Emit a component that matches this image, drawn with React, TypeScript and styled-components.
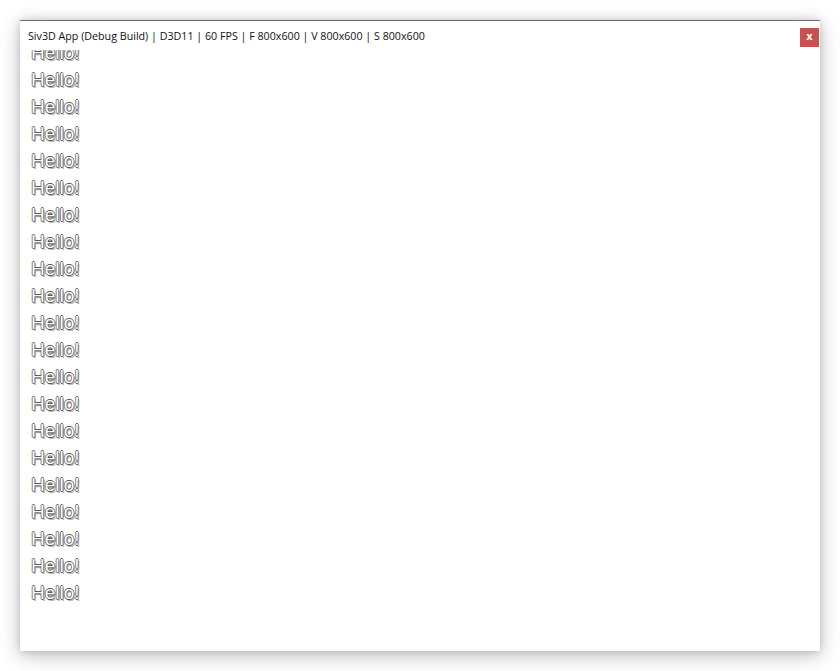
import React from "react";
import styled, { createGlobalStyle } from "styled-components";

const Global = createGlobalStyle`
  html, body { margin: 0; padding: 0; background: #ffffff; }
  body { width: 840px; height: 671px; overflow: hidden; }
`;

const Page = styled.div`
  width: 840px;
  height: 671px;
  padding: 20px 20px 0 20px;
  box-sizing: border-box;
  background: #ffffff;
`;

const Window = styled.div`
  width: 800px;
  height: 631px;
  box-sizing: border-box;
  border-top: 1px solid #6e6e6e;
  background: #ffffff;
  box-shadow: 0 4px 18px rgba(0, 0, 0, 0.28), 0 0 6px rgba(0, 0, 0, 0.12);
  display: flex;
  flex-direction: column;
`;

const TitleBar = styled.div`
  height: 29px;
  flex: 0 0 29px;
  display: flex;
  align-items: flex-start;
  justify-content: space-between;
  position: relative;
  z-index: 1;
  background: #ffffff;
`;

const Title = styled.span`
  font-family: "Open Sans", "Noto Sans", sans-serif;
  font-size: 10.7px;
  color: #111;
  margin: 8px 0 0 8px;
  line-height: 14px;
`;

const CloseButton = styled.div`
  width: 19px;
  height: 19px;
  margin: 7px 1px 0 0;
  background: #c75050;
  color: #ffffff;
  font-family: "DejaVu Sans", sans-serif;
  font-weight: bold;
  font-size: 10px;
  line-height: 17px;
  text-align: center;
`;

const Content = styled.div`
  flex: 1;
  overflow: hidden;
  padding-left: 11px;
`;

const List = styled.div`
  margin-top: -11.5px;
  display: flex;
  flex-direction: column;
`;

const Hello = styled.div`
  height: 27px;
  line-height: 27px;
  font-family: "Liberation Sans", Arial, sans-serif;
  font-size: 19px;
  color: #ffffff;
  text-shadow:
    -0.7px 0 #5a5a5a, 0.7px 0 #5a5a5a, 0 -0.7px #5a5a5a, 0 0.7px #5a5a5a,
    1.5px 1.5px #b8b8b8;
`;

export default function App() {
  const rows = Array.from({ length: 21 });
  return (
    <>
      <Global />
      <Page>
        <Window>
          <TitleBar>
            <Title>Siv3D App (Debug Build) | D3D11 | 60 FPS | F 800x600 | V 800x600 | S 800x600</Title>
            <CloseButton>x</CloseButton>
          </TitleBar>
          <Content>
            <List>
              {rows.map((_, i) => (
                <Hello key={i}>Hello!</Hello>
              ))}
            </List>
          </Content>
        </Window>
      </Page>
    </>
  );
}
